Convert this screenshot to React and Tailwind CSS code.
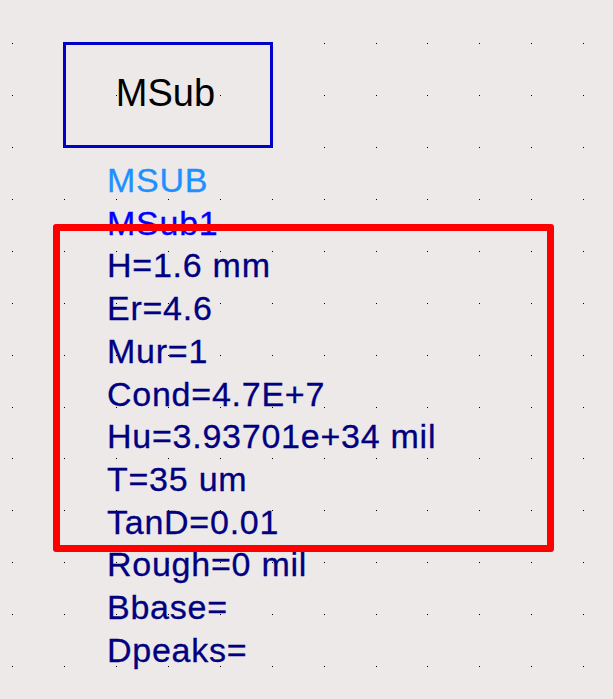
import React from "react";

const XS = [12, 64, 116, 168, 220, 272, 324, 376, 427, 479, 531, 583];
const YS = [43, 95, 147, 199, 251, 303, 355, 407, 458, 510, 562, 614, 666];

const params = [
  "H=1.6 mm",
  "Er=4.6",
  "Mur=1",
  "Cond=4.7E+7",
  "Hu=3.93701e+34 mil",
  "T=35 um",
  "TanD=0.01",
  "Rough=0 mil",
  "Bbase=",
  "Dpeaks=",
];

function DotGrid() {
  return (
    <svg
      className="absolute inset-0"
      width="613"
      height="699"
      viewBox="0 0 613 699"
      shapeRendering="crispEdges"
    >
      {YS.map((y) =>
        XS.map((x) => (
          <rect key={`${x}-${y}`} x={x} y={y} width="1" height="1" fill="#000" />
        ))
      )}
    </svg>
  );
}

export default function App() {
  return (
    <div
      className="relative w-[613px] h-[699px] overflow-hidden bg-[#ede9e8]"
      style={{ fontFamily: '"Liberation Sans", Arial, sans-serif' }}
    >
      <DotGrid />
      <div className="relative flex flex-col pt-[42px]">
        <div className="ml-[63px] w-[210px] h-[106px] border-[3px] border-[#0000cc] flex items-center justify-center pb-[4px] pr-[5px]">
          <span className="text-[38px] leading-none text-black">MSub</span>
        </div>
        <div className="ml-[107px] mt-[11px] flex flex-col text-[34px] leading-[42.7px] tracking-[0.75px] [-webkit-text-stroke:0.3px_currentColor]">
          <span className="text-[#1e90ff]">MSUB</span>
          <span className="text-[#0000ff]">MSub1</span>
          {params.map((p) => (
            <span key={p} className="text-[#000080]">
              {p}
            </span>
          ))}
        </div>
      </div>
      <div className="absolute left-[53px] top-[224px] w-[501px] h-[328px] border-[7px] border-[#ff0000] rounded-[3px]" />
    </div>
  );
}
